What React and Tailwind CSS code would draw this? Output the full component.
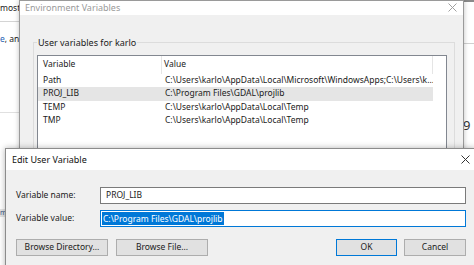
import React from "react";

const FONT = { fontFamily: '"Noto Sans", "Segoe UI", sans-serif' };

function CloseX({ color }) {
  return (
    <svg width="9" height="9" viewBox="0 0 9 9" className="block">
      <path d="M0.5 0.5 L8.5 8.5 M8.5 0.5 L0.5 8.5" stroke={color} strokeWidth="1" fill="none" />
    </svg>
  );
}

export default function App() {
  const rows = [
    { v: "Path", val: "C:\\Users\\karlo\\AppData\\Local\\Microsoft\\WindowsApps;C:\\Users\\k...", sel: false },
    { v: "PROJ_LIB", val: "C:\\Program Files\\GDAL\\projlib", sel: true },
    { v: "TEMP", val: "C:\\Users\\karlo\\AppData\\Local\\Temp", sel: false },
    { v: "TMP", val: "C:\\Users\\karlo\\AppData\\Local\\Temp", sel: false },
  ];
  return (
    <div className="relative w-[474px] h-[265px] overflow-hidden bg-white text-[8.5px] text-[#1a1a1a]" style={FONT}>
      {/* background page, left strip */}
      <div className="absolute left-0 top-0 w-[30px] h-full">
        <div className="h-[22px] border-b border-[#d4d4d4] flex items-center whitespace-nowrap">
          <span className="-mt-[4px]">most c</span>
        </div>
        <div className="mt-[11px] whitespace-nowrap">
          <span className="text-[#1a5fb4]">e</span>, and
        </div>
        <div className="mt-[66px] border-b border-[#e0e0e0]" />
        <div className="mt-[96px] w-[6px] h-[8px] bg-[#e4e4e4] text-[7px] leading-[8px] text-[#3a5a8a] overflow-hidden">m</div>
      </div>
      {/* background page, right strip */}
      <div className="absolute left-[462px] top-0 w-[14px] h-full">
        <div className="h-[2px] bg-[#8a8a8a]" />
        <div className="mt-[41px] border-b border-[#d0d0d0]" />
        <div className="mt-[74px] text-[13px] leading-[14px] text-[#333] pl-[1px]">9</div>
      </div>

      {/* Environment Variables window */}
      <div className="absolute left-[19px] top-0 w-[445px] h-[170px] flex flex-col border border-[#9a9a9a] bg-[#f0f0f0] shadow-[0_0_5px_rgba(0,0,0,0.25)]">
        <div className="h-[19px] bg-white flex items-center justify-between pl-[5px] pr-[6px]">
          <span className="text-[#9a9a9a] text-[9px]">Environment Variables</span>
          <CloseX color="#a0a0a0" />
        </div>
        <div className="pt-[23px] pl-[13px] pr-[8px]">
          <fieldset className="border border-[#dcdcdc] pl-[3px] pr-[7px] pt-[7px] h-[200px]">
            <legend className="px-[1px] text-[9px] leading-[10px]">User variables for karlo</legend>
            <div className="w-[410px] h-[160px] bg-white border border-[#828790]">
              <div className="flex h-[18px] items-center">
                <div className="w-[124px] h-full flex items-center pl-[5px] border-r border-[#e5e5e5]">Variable</div>
                <div className="w-[271px] h-full flex items-center pl-[2px] border-r border-[#e5e5e5]">Value</div>
              </div>
              {rows.map((r) => (
                <div key={r.v} className={"flex w-[395px] h-[13.5px] items-center " + (r.sel ? "bg-[#e5e5e5]" : "")}>
                  <div className="w-[124px] pl-[5px] whitespace-nowrap">{r.v}</div>
                  <div className="w-[271px] pl-[3px] whitespace-nowrap overflow-hidden">{r.val}</div>
                </div>
              ))}
            </div>
          </fieldset>
        </div>
      </div>

      {/* Edit User Variable dialog */}
      <div className="absolute left-[5px] top-[148px] w-[471px] h-[130px] flex flex-col border border-[#8c8c8c] bg-[#f0f0f0] shadow-[0_0_6px_rgba(0,0,0,0.3)]">
        <div className="h-[21px] bg-white flex items-center justify-between pl-[6px] pr-[5px]">
          <span className="text-[9px] text-[#111]">Edit User Variable</span>
          <CloseX color="#333" />
        </div>
        <div className="pl-[10px] pt-[17px] flex flex-col">
          <div className="flex items-center h-[17px]">
            <div className="w-[84px]">Variable name:</div>
            <div className="w-[366px] h-[17px] bg-white border border-[#7a7a7a] flex items-center pl-[5px]">PROJ_LIB</div>
          </div>
          <div className="flex items-center h-[17px] mt-[6px]">
            <div className="w-[84px]">Variable value:</div>
            <div className="w-[366px] h-[17px] bg-white border border-[#0078d7] flex items-center pl-[1px]">
              <span className="bg-[#0078d7] text-white px-[1px] leading-[13px]">C:\Program Files\GDAL\projlib</span>
            </div>
          </div>
          <div className="flex items-center mt-[12px]">
            <div className="w-[92px] h-[17px] bg-[#e1e1e1] border border-[#adadad] flex items-center justify-center">Browse Directory...</div>
            <div className="w-[92px] h-[17px] ml-[8px] bg-[#e1e1e1] border border-[#adadad] flex items-center justify-center">Browse File...</div>
            <div className="w-[61px] h-[17px] ml-[128px] bg-[#e1e1e1] border border-[#0078d7] flex items-center justify-center">OK</div>
            <div className="w-[62px] h-[17px] ml-[7px] bg-[#e1e1e1] border border-[#adadad] flex items-center justify-center">Cancel</div>
          </div>
        </div>
      </div>
    </div>
  );
}
